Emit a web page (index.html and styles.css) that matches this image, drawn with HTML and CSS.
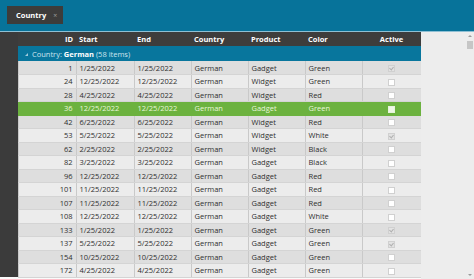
FILE: index.html
```html
<!DOCTYPE html>
<html lang="en">

<head>
    <meta charset="UTF-8">
    <meta name="viewport" content="width=device-width, initial-scale=1.0">
    <title>Grid - Grouped by Country</title>
    <link rel="stylesheet" href="styles.css">
</head>

<body>
    <div class="toolbar">
        <span class="chip">Country <span class="chip-close">&times;</span></span>
    </div>
    <div class="main">
        <div class="grid">
            <table>
                <colgroup>
                    <col class="c-gutter">
                    <col class="c-id">
                    <col class="c-start">
                    <col class="c-end">
                    <col class="c-country">
                    <col class="c-product">
                    <col class="c-color">
                    <col class="c-active">
                </colgroup>
                <thead>
                    <tr class="head">
                        <th class="gutter"></th>
                        <th class="num">ID</th>
                        <th>Start</th>
                        <th>End</th>
                        <th>Country</th>
                        <th>Product</th>
                        <th>Color</th>
                        <th class="center">Active</th>
                    </tr>
                </thead>
                <tbody id="rows">
                    <tr class="group">
                        <td class="gutter"></td>
                        <td colspan="7"><span class="expander"></span>Country: <b>German</b> (58 items)</td>
                    </tr>
                </tbody>
            </table>
        </div>
        <div class="side">
            <div class="scrollbar">
                <span class="arrow up"></span>
                <span class="thumb"></span>
                <span class="track"></span>
                <span class="arrow down"></span>
            </div>
        </div>
    </div>

    <script>
        // id, date, product, color, active
        const data = [
            [1, '1/25/2022', 'Gadget', 'Green', true],
            [24, '12/25/2022', 'Widget', 'Green', false],
            [28, '4/25/2022', 'Widget', 'Red', false],
            [36, '12/25/2022', 'Gadget', 'Green', false],
            [42, '6/25/2022', 'Widget', 'Red', false],
            [53, '5/25/2022', 'Widget', 'White', true],
            [62, '2/25/2022', 'Widget', 'Black', false],
            [82, '3/25/2022', 'Gadget', 'Black', false],
            [96, '12/25/2022', 'Gadget', 'Red', false],
            [101, '11/25/2022', 'Gadget', 'Red', false],
            [107, '11/25/2022', 'Gadget', 'Red', false],
            [108, '12/25/2022', 'Gadget', 'White', false],
            [133, '1/25/2022', 'Gadget', 'Green', true],
            [137, '5/25/2022', 'Gadget', 'Green', true],
            [154, '10/25/2022', 'Gadget', 'Green', false],
            [172, '4/25/2022', 'Gadget', 'Green', false]
        ];
        const selectedId = 36;

        const tbody = document.getElementById('rows');
        data.forEach((d, i) => {
            const tr = document.createElement('tr');
            tr.className = i % 2 === 0 ? 'row' : 'row alt';
            if (d[0] === selectedId) tr.classList.add('selected');
            tr.innerHTML =
                '<td class="gutter"></td>' +
                '<td class="num">' + d[0] + '</td>' +
                '<td>' + d[1] + '</td>' +
                '<td>' + d[1] + '</td>' +
                '<td>German</td>' +
                '<td>' + d[2] + '</td>' +
                '<td>' + d[3] + '</td>' +
                '<td class="center"><span class="check' + (d[4] ? ' on' : '') + '"></span></td>';
            tbody.appendChild(tr);
        });
    </script>
</body>

</html>
```

FILE: styles.css
```css
body {
    margin: 0;
    font-family: "Open Sans", Arial, sans-serif;
    font-size: 7.5px;
    background-color: #ededed;
    height: 279px;
    overflow: hidden;
}

.toolbar {
    height: 31px;
    background-color: #07739a;
    padding: 6px 0 0 7px;
    box-sizing: border-box;
}

.chip {
    display: inline-flex;
    align-items: center;
    height: 18px;
    width: 56px;
    box-sizing: border-box;
    padding-left: 9px;
    background-color: #3d3c3b;
    color: #ffffff;
    font-weight: bold;
    font-size: 7.5px;
}

.chip-close {
    margin-left: 7px;
    font-size: 7px;
    font-weight: normal;
    color: #9c9c9c;
}

.main {
    display: flex;
    height: 248px;
    border-top: 1px solid #8fc0d4;
    box-sizing: border-box;
}

.grid {
    width: 421px;
    height: 247px;
    overflow: hidden;
    background-color: #fafafa;
}

table {
    border-collapse: collapse;
    table-layout: fixed;
    width: 421px;
}

.c-gutter { width: 18px; }
.c-id { width: 58px; }
.c-start { width: 58px; }
.c-end { width: 57px; }
.c-country { width: 57px; }
.c-product { width: 57px; }
.c-color { width: 57px; }
.c-active { width: 59px; }

tr.head {
    height: 14px;
}

tr.group {
    height: 15px;
}

tr.row {
    height: 13.5px;
}

th {
    padding: 0 3px;
    line-height: 10px;
    background-color: #3e3d3c;
    color: #ffffff;
    font-weight: bold;
    text-align: left;
    white-space: nowrap;
}

td {
    padding: 0 3px;
    line-height: 10px;
    color: #2f2f2f;
    white-space: nowrap;
    overflow: hidden;
    border-left: 1px solid #c9c9c9;
    border-bottom: 1px solid #d4d4d4;
}

.num {
    text-align: right;
}

.center {
    text-align: center;
}

.gutter {
    background-color: #3b3b3b;
    border: none;
    padding: 0;
}

.row td {
    background-color: #dedede;
}

.row.alt td {
    background-color: #ececec;
}

.row td.gutter {
    background-color: #3b3b3b;
}

.row.selected td {
    background-color: #6cb23f;
    color: #e8f6da;
    border-color: #6cb23f;
}

.row.selected td.gutter {
    background-color: #3b3b3b;
}

.group td {
    background-color: #08769d;
    color: #cde4ee;
    border: none;
    padding-left: 7px;
}

.group td.gutter {
    background-color: #3b3b3b;
    padding: 0;
}

.group b {
    color: #ffffff;
}

.expander {
    display: inline-block;
    width: 0;
    height: 0;
    border-left: 3px solid transparent;
    border-bottom: 3px solid #9fcadc;
    margin-right: 4px;
    vertical-align: 1px;
}

.check {
    display: inline-block;
    width: 5px;
    height: 5px;
    border: 1px solid #d0d0d0;
    background-color: #ffffff;
    vertical-align: middle;
    position: relative;
}

.check.on {
    background-color: #e2e2e2;
}

.check.on::after {
    content: "";
    position: absolute;
    left: 1px;
    top: 0;
    width: 2px;
    height: 3px;
    border-right: 1px solid #b0b0b0;
    border-bottom: 1px solid #b0b0b0;
    transform: rotate(40deg);
}

.selected .check {
    border-color: #e6f3dc;
    background-color: #eef8e6;
}

.side {
    flex: 1;
    display: flex;
    justify-content: flex-end;
    padding: 3px 1px 3px 0;
}

.scrollbar {
    width: 7px;
    display: flex;
    flex-direction: column;
    align-items: center;
}

.arrow {
    width: 0;
    height: 0;
    border-left: 2px solid transparent;
    border-right: 2px solid transparent;
}

.arrow.up {
    border-bottom: 2px solid #9a9a9a;
    margin-bottom: 4px;
}

.arrow.down {
    border-top: 2px solid #9a9a9a;
}

.thumb {
    width: 6px;
    height: 8px;
    background-color: #c6c6c6;
}

.track {
    flex: 1;
}
```
